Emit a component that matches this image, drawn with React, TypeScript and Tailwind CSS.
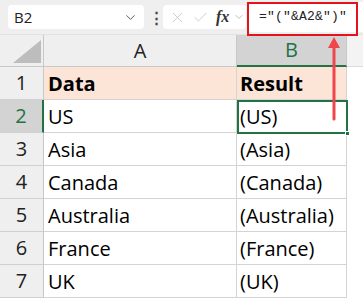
import { ChevronDown, X, Check } from 'lucide-react'

const rows = [
  { n: 1, a: 'Data', b: 'Result', head: true },
  { n: 2, a: 'US', b: '(US)' },
  { n: 3, a: 'Asia', b: '(Asia)' },
  { n: 4, a: 'Canada', b: '(Canada)' },
  { n: 5, a: 'Australia', b: '(Australia)' },
  { n: 6, a: 'France', b: '(France)' },
  { n: 7, a: 'UK', b: '(UK)' },
]

const font = { fontFamily: '"Open Sans", "Liberation Sans", sans-serif' }

export default function App() {
  return (
    <div className="relative w-[363px] h-[300px] overflow-hidden bg-white" style={font}>
      {/* formula bar */}
      <div className="flex items-center h-[35px] bg-[#efefef] border-b border-[#e2e2e2]">
        <div className="ml-[8px] w-[136px] h-[24px] bg-white rounded-[4px] flex items-center justify-between pl-[6px] pr-[6px]">
          <span className="text-[15px] text-[#222]">B2</span>
          <ChevronDown size={15} strokeWidth={1.5} className="text-[#555]" />
        </div>
        <span className="ml-[5px] w-[12px] text-center text-[15px] font-bold text-[#444] leading-none">⋮</span>
        <div className="ml-[2px] w-[83px] h-[24px] bg-white rounded-[4px] flex items-center pl-[6px] gap-[4px]">
          <X size={17} strokeWidth={1.2} className="text-[#c4c4c4]" />
          <Check size={17} strokeWidth={1.2} className="text-[#c4c4c4] ml-[2px]" />
          <span className="ml-[3px] text-[16px] italic font-bold text-[#333]" style={{ fontFamily: '"Liberation Serif", serif' }}>fx</span>
          <ChevronDown size={12} strokeWidth={1.3} className="text-[#999]" />
        </div>
        <div className="ml-[3px] flex-1 h-[30px] bg-white flex items-center pl-[10px]">
          <span className="text-[13px] text-[#222] tracking-[0.2px]" style={{ fontFamily: '"Liberation Mono", monospace' }}>="("&amp;A2&amp;")"</span>
        </div>
      </div>

      {/* sheet */}
      <div className="grid grid-cols-[44px_193px_110px_1fr]">
        {/* column headers */}
        <div className="h-[32px] bg-[#efefef] border-r border-b border-[#c8c8c8] flex items-end justify-end pr-[2px] pb-[3px]">
          <svg width="28" height="23" viewBox="0 0 28 23"><polygon points="28,0 28,23 0,23" fill="#bdbdbd" /></svg>
        </div>
        <div className="h-[32px] bg-[#efefef] border-r border-b border-[#c8c8c8] flex items-center justify-center text-[20px] text-[#222]">A</div>
        <div className="h-[32px] bg-[#d3d3d3] border-r border-[#c8c8c8] border-b-2 border-b-[#217346] flex items-center justify-center text-[20px] text-[#217346]">B</div>
        <div className="h-[32px] bg-[#f3f3f3] border-b border-[#dcdcdc]" />

        {rows.map((r) => (
          <div key={r.n} className="contents">
            <div
              className={`h-[33px] flex items-center justify-center text-[20px] border-b border-[#d0d0d0] ${
                r.n === 2 ? 'bg-[#d3d3d3] text-[#217346] border-r-2 border-r-[#217346]' : 'bg-[#efefef] text-[#222] border-r border-r-[#c8c8c8]'
              }`}
            >
              {r.n}
            </div>
            <div
              className={`h-[33px] flex items-center pl-[4px] pt-[1px] text-[20px] text-black border-r border-b border-[#d4d4d4] ${
                r.head ? 'bg-[#fce4d6] font-bold' : 'bg-white'
              }`}
            >
              {r.a}
            </div>
            <div
              className={`h-[33px] flex items-center pl-[3px] pt-[1px] text-[20px] text-black border-r border-b border-[#d4d4d4] whitespace-nowrap ${
                r.head ? 'bg-[#fce4d6] font-bold' : 'bg-white'
              }`}
            >
              {r.b}
            </div>
            <div className="h-[33px] bg-white" />
          </div>
        ))}
      </div>

      {/* selection on B2 */}
      <div className="absolute left-[237px] top-[100px] w-[111px] h-[34px] border-2 border-[#217346] pointer-events-none" />
      <div className="absolute left-[345px] top-[131px] w-[5px] h-[5px] bg-[#217346] border border-white" />

      {/* red highlight + arrow */}
      <div className="absolute left-[247px] top-[2px] w-[111px] h-[34px] border-2 border-[#e3141b]" />
      <svg className="absolute left-[327px] top-[37px]" width="14" height="84" viewBox="0 0 14 84">
        <line x1="7" y1="8" x2="7" y2="82" stroke="#f0464b" strokeWidth="3" strokeLinecap="round" />
        <polygon points="7,0 13,11 1,11" fill="#f0464b" />
      </svg>
    </div>
  )
}
